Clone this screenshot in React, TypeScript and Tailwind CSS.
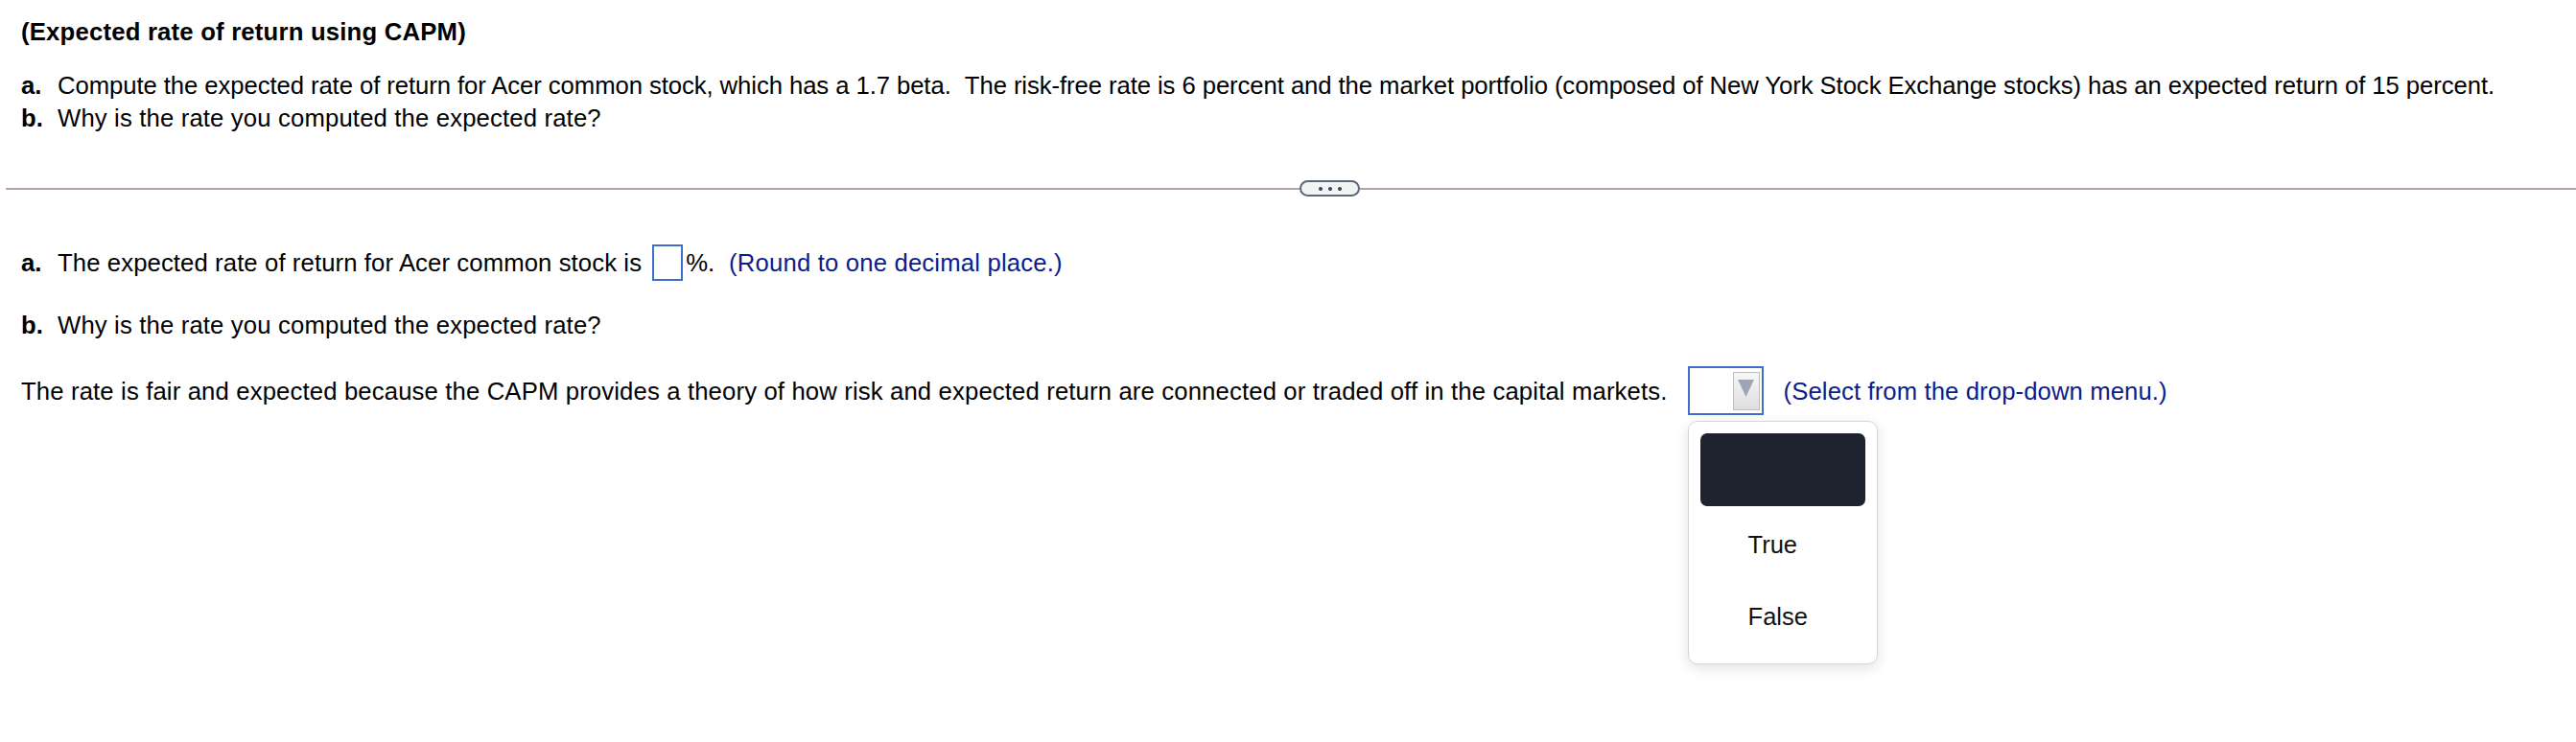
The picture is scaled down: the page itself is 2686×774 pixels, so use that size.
import React from 'react'

const sp = '\u00a0'

const Label = ({ children }: { children: React.ReactNode }) => (
  <span className="inline-block w-[38px] font-bold tracking-normal">{children}</span>
)

const Dropdown = () => (
  <div className="relative mx-[21px] shrink-0">
    <div className="flex h-[51px] w-[79px] items-center justify-end border-2 border-[#3d6fcb] bg-white pr-[2px]">
      <div className="flex h-[40px] w-[28px] items-start justify-center border border-[#bdbdbd] bg-gradient-to-b from-[#f7f7f7] to-[#dedede] pt-[7px]">
        <svg width="17" height="18" viewBox="0 0 17 18">
          <polygon points="0,0 17,0 8.5,18" fill="#9ea6b6" />
        </svg>
      </div>
    </div>

    {/* open menu */}
    <div className="absolute left-0 top-[57px] z-10 w-[198px] rounded-[10px] border border-[#d6d6d6] bg-white px-[12px] pb-[12px] pt-[12px] shadow-[0_4px_14px_rgba(0,0,0,0.12)]">
      <div className="h-[76px] rounded-[7px] bg-[#1f232f]" />
      <div className="mt-[2px]">
        {['True', 'False'].map((opt) => (
          <div key={opt} className="flex h-[75px] items-center pl-[50px] text-[25.5px] tracking-normal text-[#111]">
            {opt}
          </div>
        ))}
      </div>
    </div>
  </div>
)

export default function App() {
  return (
    <div className="min-h-screen bg-white font-['Liberation_Sans',Arial,sans-serif] text-[25.7px] leading-[34px] text-black">
      {/* Question */}
      <div className="pl-[22px] pt-[16px]">
        <div className="font-bold tracking-[0.2px]">(Expected rate of return using CAPM)</div>
        <div className="mt-[22px] whitespace-nowrap">
          <div className="tracking-[-0.08px]">
            <Label>a.</Label>
            Compute the expected rate of return for Acer common stock, which has a 1.7 beta.{sp}{sp}The risk-free rate is 6 percent and the market portfolio (composed of New York Stock Exchange stocks) has an expected return of 15 percent.
          </div>
          <div className="tracking-[0.15px]">
            <Label>b.</Label>
            Why is the rate you computed the expected rate?
          </div>
        </div>
      </div>

      {/* Divider */}
      <div className="mt-[48px] flex h-[17px] items-center pl-[6px]">
        <div className="h-[2px] w-[1349px] bg-[#b89ea7]" />
        <div className="flex h-[17px] w-[63px] items-center justify-center gap-[6px] rounded-full border-2 border-[#5b6778] bg-[#f2f3f5]">
          <span className="h-[4px] w-[4px] rounded-full bg-[#3b4252]" />
          <span className="h-[4px] w-[4px] rounded-full bg-[#3b4252]" />
          <span className="h-[4px] w-[4px] rounded-full bg-[#3b4252]" />
        </div>
        <div className="h-[2px] flex-1 bg-[#b89ea7]" />
      </div>

      {/* Answers */}
      <div className="pl-[22px] whitespace-nowrap">
        <div className="mt-[50px] flex h-[38px] items-center">
          <Label>a.</Label>
          <span className="tracking-[0.1px]">The expected rate of return for Acer common stock is</span>
          <span className="ml-[11px] h-[38px] w-[32px] border-2 border-[#3d6fcb] bg-white" />
          <span className="ml-[3px]">%.</span>
          <span className="ml-[15px] tracking-[0.17px] text-[#0c1c8c]">(Round to one decimal place.)</span>
        </div>

        <div className="mt-[29px] tracking-[0.15px]">
          <Label>b.</Label>
          Why is the rate you computed the expected rate?
        </div>

        <div className="mt-[26px] flex h-[51px] items-center">
          <span className="tracking-[0.14px]">The rate is fair and expected because the CAPM provides a theory of how risk and expected return are connected or traded off in the capital markets.</span>
          <Dropdown />
          <span className="tracking-[0.1px] text-[#0c1c8c]">(Select from the drop-down menu.)</span>
        </div>
      </div>
    </div>
  )
}
